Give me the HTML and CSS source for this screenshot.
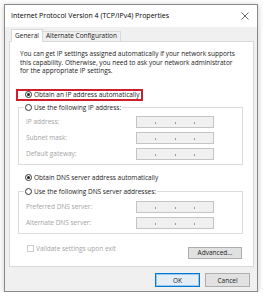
FILE: index.html
```html
<!DOCTYPE html>
<html>
<head>
<meta charset="utf-8">
<title>Internet Protocol Version 4 (TCP/IPv4) Properties</title>
<link rel="stylesheet" href="styles.css">
</head>
<body>
<div class="window">
  <div class="titlebar">
    <span class="title">Internet Protocol Version 4 (TCP/IPv4) Properties</span>
    <svg class="close" width="8" height="8" viewBox="0 0 8 8"><path d="M0.5 0.5L7.5 7.5M7.5 0.5L0.5 7.5" stroke="#404040" stroke-width="0.8" fill="none"/></svg>
  </div>
  <div class="client">
    <div class="tabs">
      <div class="tab active">General</div>
      <div class="tab">Alternate Configuration</div>
    </div>
    <div class="panel">
      <p class="intro">You can get IP settings assigned automatically if your network supports<br>this capability. Otherwise, you need to ask your network administrator<br>for the appropriate IP settings.</p>
      <div class="highlight"><span class="radio checked"></span><span>Obtain an IP address automatically</span></div>
      <fieldset class="group">
        <legend><span class="legend-in"><span class="radio"></span><span>Use the following IP address:</span></span></legend>
        <div class="row first"><span class="label">IP address:</span><span class="ipbox"><i></i><i></i><i></i></span></div>
        <div class="row"><span class="label">Subnet mask:</span><span class="ipbox"><i></i><i></i><i></i></span></div>
        <div class="row"><span class="label">Default gateway:</span><span class="ipbox"><i></i><i></i><i></i></span></div>
      </fieldset>
      <div class="radio-row"><span class="radio checked"></span><span>Obtain DNS server address automatically</span></div>
      <fieldset class="group group-dns">
        <legend><span class="legend-in"><span class="radio"></span><span>Use the following DNS server addresses:</span></span></legend>
        <div class="row first"><span class="label">Preferred DNS server:</span><span class="ipbox"><i></i><i></i><i></i></span></div>
        <div class="row"><span class="label">Alternate DNS server:</span><span class="ipbox"><i></i><i></i><i></i></span></div>
      </fieldset>
      <div class="bottom-row">
        <div class="check"><span class="checkbox"></span><span>Validate settings upon exit</span></div>
        <div class="btn btn-adv">Advanced...</div>
      </div>
    </div>
    <div class="footer">
      <div class="btn btn-main default">OK</div>
      <div class="btn btn-main">Cancel</div>
    </div>
  </div>
</div>
</body>
</html>
```
FILE: styles.css
```css
* { box-sizing: border-box; }
body {
  margin: 0;
  padding: 4px 0 0 4px;
  background: #fff;
  font-family: "Open Sans", "Noto Sans", sans-serif;
  font-size: 6.5px;
  color: #1a1a1a;
  white-space: nowrap;
}
.window {
  width: 254px;
  height: 288px;
  border: 1px solid #8a8a8a;
  display: flex;
  flex-direction: column;
  background: #f0f0f0;
  box-shadow: 0 1px 6px rgba(0,0,0,0.22);
}
.titlebar {
  height: 22px;
  flex: none;
  background: #fff;
  display: flex;
  align-items: center;
  justify-content: space-between;
  padding: 0 8px 1px 6px;
  color: #000;
  font-size: 7px;
}
.client {
  flex: 1;
  display: flex;
  flex-direction: column;
  padding: 2px 3px 0 4px;
}
.tabs {
  display: flex;
  height: 12px;
  flex: none;
  align-items: flex-end;
  padding-left: 2px;
}
.tab {
  height: 10px;
  padding: 0 3px;
  border: 1px solid #d9d9d9;
  border-bottom: none;
  display: flex;
  align-items: center;
  line-height: 1;
  background: #f0f0f0;
}
.tab + .tab { border-left: none; }
.tab.active {
  height: 13px;
  margin-bottom: -1px;
  background: #fff;
  position: relative;
  z-index: 1;
}
.panel {
  height: 226px;
  flex: none;
  background: #fff;
  border: 1px solid #d9d9d9;
  display: flex;
  flex-direction: column;
  padding-top: 8px;
}
.intro {
  margin: 0 0 0 10px;
  line-height: 8.6px;
}
.radio {
  width: 7px;
  height: 7px;
  flex: none;
  border-radius: 50%;
  border: 1px solid #333;
  background: #fff;
  display: flex;
  align-items: center;
  justify-content: center;
}
.radio.checked::after {
  content: "";
  width: 3px;
  height: 3px;
  border-radius: 50%;
  background: #222;
}
.highlight {
  margin: 13px 0 0 6px;
  width: 127px;
  height: 12px;
  border: 2px solid #d11e2d;
  display: flex;
  align-items: center;
  gap: 2px;
  padding-left: 7px;
}
.group {
  margin: 2px 10px 0 8px;
  border: 1px solid #dcdcdc;
  padding: 0 28px 4px 7px;
  min-width: 0;
}
.group legend {
  padding: 0 1px;
  margin-left: -2px;
  height: 10px;
}
.legend-in {
  display: flex;
  align-items: center;
  gap: 2px;
  height: 10px;
}
.group-dns { margin-top: 4px; }
.row {
  display: flex;
  align-items: center;
  height: 12px;
  margin-top: 4px;
}
.row.first { margin-top: 3px; }
.group-dns .row.first { margin-top: 4px; }
.label {
  flex: 1;
  color: #a3a3a3;
}
.ipbox {
  width: 78px;
  height: 12px;
  border: 1px solid #c4c4c4;
  background: #f0f0f0;
  display: flex;
  justify-content: space-evenly;
  align-items: flex-end;
  padding-bottom: 3px;
}
.ipbox i {
  width: 1px;
  height: 2px;
  background: #9a9a9a;
}
.radio-row {
  margin: 8px 0 0 15px;
  height: 10px;
  display: flex;
  align-items: center;
  gap: 2px;
}
.bottom-row {
  display: flex;
  justify-content: space-between;
  align-items: flex-start;
  margin: 11px 11px 0 17px;
}
.check {
  display: flex;
  align-items: center;
  gap: 2px;
  height: 8px;
  color: #a3a3a3;
}
.checkbox {
  width: 7px;
  height: 7px;
  border: 1px solid #cccccc;
}
.btn {
  background: #e1e1e1;
  border: 1px solid #adadad;
  display: flex;
  align-items: center;
  justify-content: center;
  color: #1a1a1a;
}
.btn-adv {
  width: 54px;
  height: 12px;
  margin-top: 2px;
}
.footer {
  display: flex;
  justify-content: flex-end;
  gap: 5px;
  padding: 6px 4px 0 0;
}
.btn-main {
  width: 45px;
  height: 14px;
}
.btn.default {
  border-color: #0078d7;
  box-shadow: inset 0 0 0 1px #9cc7ec;
  background: #e5eef7;
}
```
